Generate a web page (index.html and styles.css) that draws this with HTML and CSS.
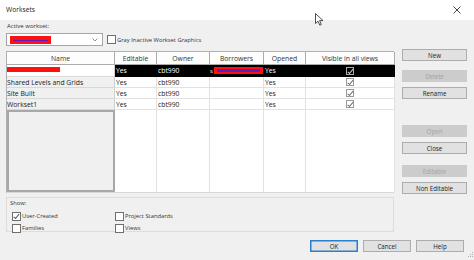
FILE: index.html
```html
<!DOCTYPE html>
<html>
<head>
<meta charset="utf-8">
<link rel="stylesheet" href="styles.css">
</head>
<body>
<div class="window">
  <div class="titlebar">
    <span class="title">Worksets</span>
    <svg class="close" width="8" height="8" viewBox="0 0 8 8"><path d="M0.5 0.5L7.5 7.5M7.5 0.5L0.5 7.5" stroke="#333" stroke-width="0.9" fill="none"/></svg>
  </div>
  <div class="content">
    <div class="left">
      <div class="label">Active workset:</div>
      <div class="active-row">
        <div class="combo">
          <span class="redact-combo"><span class="redact-line"></span></span>
          <svg class="chev" width="6" height="4" viewBox="0 0 6 4"><path d="M0.5 0.5L3 3L5.5 0.5" stroke="#777" stroke-width="0.8" fill="none"/></svg>
        </div>
        <div class="check"><span class="box"></span><span>Gray Inactive Workset Graphics</span></div>
      </div>
      <div class="table">
        <div class="th name">Name</div>
        <div class="th">Editable</div>
        <div class="th">Owner</div>
        <div class="th">Borrowers</div>
        <div class="th">Opened</div>
        <div class="th">Visible in all views</div>

        <div class="td name sel-name"><span class="redact-name"></span></div>
        <div class="td sel">Yes</div>
        <div class="td sel">cbt990</div>
        <div class="td sel borrow"><span class="s">s</span><span class="redact-borrow"><span class="redact-fill"></span></span></div>
        <div class="td sel">Yes</div>
        <div class="td sel center"><span class="cb on dark"></span></div>

        <div class="td name">Shared Levels and Grids</div>
        <div class="td">Yes</div>
        <div class="td">cbt990</div>
        <div class="td"></div>
        <div class="td">Yes</div>
        <div class="td center"><span class="cb on"></span></div>

        <div class="td name">Site Built</div>
        <div class="td">Yes</div>
        <div class="td">cbt990</div>
        <div class="td"></div>
        <div class="td">Yes</div>
        <div class="td center"><span class="cb on"></span></div>

        <div class="td name">Workset1</div>
        <div class="td">Yes</div>
        <div class="td">cbt990</div>
        <div class="td"></div>
        <div class="td">Yes</div>
        <div class="td center"><span class="cb on"></span></div>

        <div class="fill name"></div>
        <div class="fill"></div>
        <div class="fill"></div>
        <div class="fill"></div>
        <div class="fill"></div>
        <div class="fill"></div>
      </div>
      <div class="show">
        <div class="show-label">Show:</div>
        <div class="show-grid">
          <div class="check"><span class="cb on"></span><span>User-Created</span></div>
          <div class="check"><span class="cb"></span><span>Project Standards</span></div>
          <div class="check"><span class="cb"></span><span>Families</span></div>
          <div class="check"><span class="cb"></span><span>Views</span></div>
        </div>
      </div>
    </div>
    <div class="right">
      <div class="btn-group g1">
        <div class="btn">New</div>
        <div class="btn disabled first-gap">Delete</div>
        <div class="btn">Rename</div>
      </div>
      <div class="btn-group g2">
        <div class="btn disabled">Open</div>
        <div class="btn">Close</div>
      </div>
      <div class="btn-group g3">
        <div class="btn disabled">Editable</div>
        <div class="btn">Non Editable</div>
      </div>
    </div>
  </div>
  <div class="footer">
    <div class="btn wide default">OK</div>
    <div class="btn wide">Cancel</div>
    <div class="btn wide">Help</div>
    <svg class="grip" width="6" height="6" viewBox="0 0 6 6"><g fill="#b0b0b0"><rect x="4" y="0" width="1" height="1"/><rect x="2" y="2" width="1" height="1"/><rect x="4" y="2" width="1" height="1"/><rect x="0" y="4" width="1" height="1"/><rect x="2" y="4" width="1" height="1"/><rect x="4" y="4" width="1" height="1"/></g></svg>
  </div>
  <svg class="cursor" width="9" height="13" viewBox="0 0 9 13"><path d="M0.5 0.5L0.5 10.5L3 8.2L4.8 12.2L6.3 11.5L4.6 7.6L8 7.6Z" fill="#fff" stroke="#222" stroke-width="0.8" stroke-linejoin="round"/></svg>
</div>
</body>
</html>
```

FILE: styles.css
```css
* { box-sizing: border-box; }
html, body { margin: 0; padding: 0; }
body {
  width: 474px;
  height: 260px;
  overflow: hidden;
  background: #f0f0f0;
  font-family: "Open Sans", "Noto Sans", sans-serif;
  font-size: 6.8px;
  color: #1a1a1a;
}
.window {
  position: relative;
  width: 474px;
  height: 260px;
  display: flex;
  flex-direction: column;
}
.titlebar {
  height: 20px;
  background: #ffffff;
  display: flex;
  align-items: center;
  justify-content: space-between;
  padding: 0 13px 1px 6px;
}
.title { font-size: 6.7px; color: #222; }
.close { display: block; }
.content {
  display: flex;
  padding-left: 6px;
}
.left { width: 388px; display: flex; flex-direction: column; }
.label { height: 13px; line-height: 12px; padding-left: 1px; font-size: 6px; color: #333; }
.active-row { display: flex; align-items: center; height: 13px; }
.combo {
  width: 97px;
  height: 13px;
  background: #fff;
  border: 1px solid #a6a6a6;
  display: flex;
  align-items: center;
  justify-content: space-between;
  padding: 0 4px 0 3px;
}
.redact-combo {
  width: 41px;
  height: 8px;
  background: #ff1010;
  display: flex;
  align-items: center;
  padding-left: 3px;
}
.redact-line { width: 35px; height: 1px; background: #5a1cc4; margin-top: 2px; }
.chev { display: block; }
.active-row .check { margin-left: 4px; font-size: 5.8px; color: #333; }
.check { display: flex; align-items: center; gap: 1px; }
.box, .cb {
  display: inline-block;
  width: 9px;
  height: 9px;
  border: 1px solid #6f6f6f;
  background: #fff;
  position: relative;
  flex: none;
}
.cb.on::after {
  content: "";
  position: absolute;
  left: 2.4px;
  top: 0.7px;
  width: 2.4px;
  height: 4.6px;
  border-right: 0.9px solid #555;
  border-bottom: 0.9px solid #555;
  transform: rotate(40deg);
}
.td .cb { border-color: #9a9a9a; width: 8px; height: 8px; }
.td .cb.on::after { left: 2px; top: 0.3px; border-color: #707070; }
.cb.dark { background: #000; border-color: #aaa; }
.cb.dark::after { border-color: #cfcfcf !important; }

.table {
  margin-top: 5px;
  width: 388px;
  height: 142px;
  display: grid;
  grid-template-columns: 108px 42px 53px 54px 42px 89px;
  grid-template-rows: 13px 12px 11px 11px 11px 1fr;
  background: #fff;
  border-left: 1px solid #b0b0b0;
  border-top: 1px solid #b0b0b0;
  border-bottom: 1px solid #d6d6d6;
}
.th {
  background: #fdfdfd;
  border-right: 1px solid #acacac;
  border-bottom: 1px solid #acacac;
  display: flex;
  align-items: center;
  justify-content: center;
  color: #333;
}
.td {
  border-right: 1px solid #e2e2e2;
  border-bottom: 1px solid #e2e2e2;
  display: flex;
  align-items: center;
  padding-left: 1px;
  white-space: nowrap;
  overflow: hidden;
}
.td.name { background: #f0f0f0; border-right-color: #cfcfcf; border-bottom-color: #d8d8d8; padding-left: 0; }
.td.center { justify-content: center; padding-left: 0; }
.td.sel { background: #000; color: #fff; border-right-color: #000; border-bottom-color: #000; }
.td.sel-name { background: #fff; }
.redact-name { width: 53px; height: 5px; background: #ff1010; margin-top: -2px; }
.borrow { padding-left: 0; }
.s { font-size: 6px; width: 3px; overflow: hidden; }
.redact-borrow {
  width: 49px;
  height: 7px;
  background: #ff1010;
  display: flex;
  align-items: center;
  justify-content: center;
  margin-left: 1px;
}
.redact-fill { width: 43px; height: 3px; background: #5a1cc4; }
.fill { border-right: 1px solid #e2e2e2; }
.fill.name { background: #f0f0f0; border: 2px solid #a8a8a8; }

.show {
  margin-top: 4px;
  width: 388px;
  height: 35px;
  border: 1px solid #dcdcdc;
  padding: 1px 0 0 3px;
  font-size: 5.8px;
  color: #333;
}
.show-label { height: 8px; line-height: 8px; }
.show-grid {
  display: grid;
  grid-template-columns: 103px auto;
  grid-auto-rows: 12px;
  padding-left: 2px;
  margin-top: 3px;
}
.show-grid .check { gap: 1px; }

.right {
  display: flex;
  flex-direction: column;
  padding-top: 29px;
  margin-left: 8px;
}
.btn-group { display: flex; flex-direction: column; gap: 5px; }
.g2 { margin-top: 26px; }
.g3 { margin-top: 11px; }
.first-gap { margin-top: 4px; }
.btn {
  width: 65px;
  height: 12px;
  border: 1px solid #adadad;
  background: #e1e1e1;
  display: flex;
  align-items: center;
  justify-content: center;
  color: #222;
  font-size: 6.2px;
}
.btn.disabled { background: #cccccc; border-color: #cccccc; color: #a3a3a3; }
.footer {
  margin-top: 8px;
  display: flex;
  justify-content: flex-end;
  align-items: flex-start;
  gap: 5px;
  position: relative;
}
.btn.wide { width: 48px; }
.btn.default { border-color: #2a7fd0; box-shadow: inset 0 0 0 0.5px #2a7fd0; }
.grip { margin-top: 12px; margin-left: -1px; }
.cursor { position: absolute; left: 315px; top: 13px; }
```
